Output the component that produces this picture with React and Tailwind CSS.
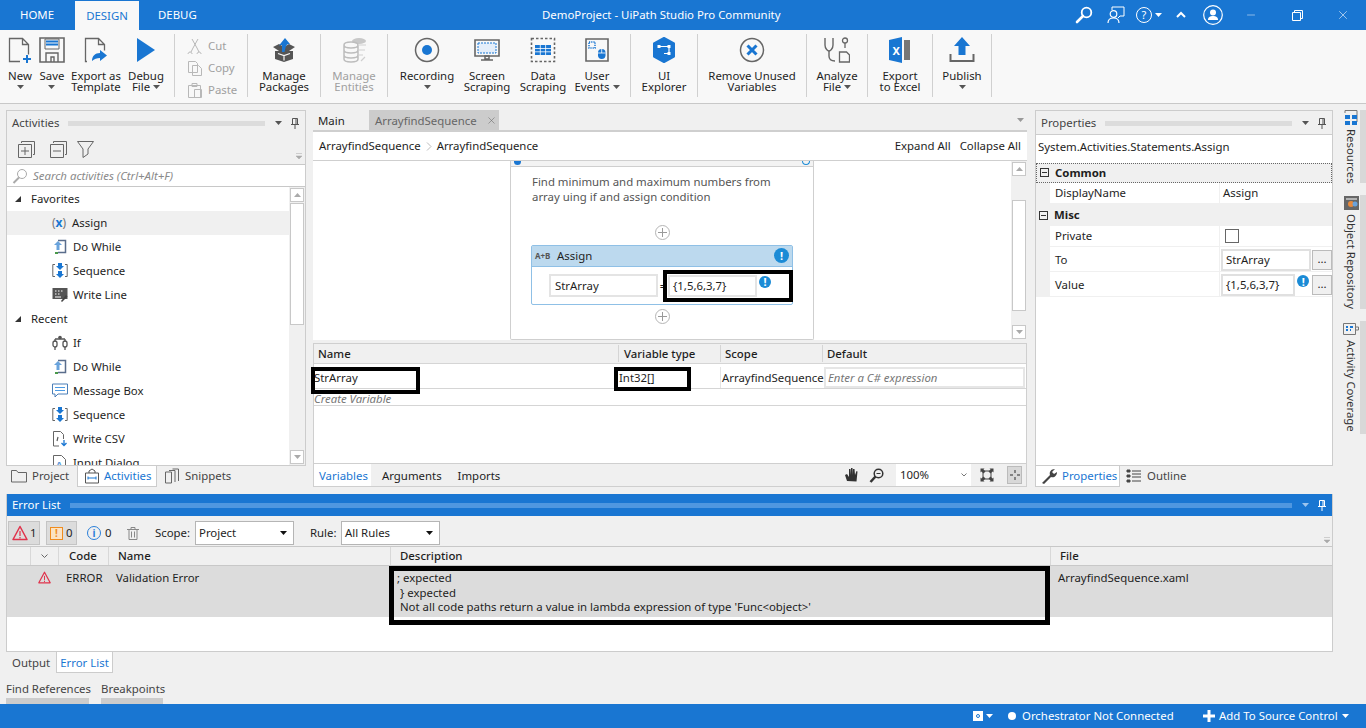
import { Minus, X } from "lucide-react";

const G = "#666666";
const B = "#1976d2";

function Caret({ color = "#555", className = "" }) {
  return (
    <svg width="7" height="4" viewBox="0 0 7 4" className={`inline-block ${className}`}>
      <path d="M0 0h7L3.5 4z" fill={color} />
    </svg>
  );
}

function Sv({ w = 16, h = 16, box, children, className = "" }) {
  return (
    <svg width={w} height={h} viewBox={box || `0 0 ${w} ${h}`} fill="none" className={`shrink-0 ${className}`}>
      {children}
    </svg>
  );
}

/* ribbon icons */
const ribbonIcons = {
  new: (
    <Sv w={24} h={26}>
      <path d="M12 24.500H1.500V1.500h13l6 6v10M14.500 1.500v6h6" stroke={G} strokeWidth="1.300" />
      <path d="M15 22h8M19 18v8" stroke={B} strokeWidth="2" />
    </Sv>
  ),
  save: (
    <Sv w={26} h={26}>
      <path d="M1 1h24v24H1z" stroke={G} strokeWidth="1.600" />
      <path d="M6 2h14v10H6z" stroke={G} strokeWidth="1" />
      <path d="M7 4.500h12M7 7.500h12" stroke={B} strokeWidth="1.800" />
      <path d="M7 25v-9h12v9M12 25v-5h3v5" stroke={G} strokeWidth="1.400" />
    </Sv>
  ),
  export: (
    <Sv w={24} h={26}>
      <path d="M3 24.500H1.500V1.500h13l6 6v6M14.500 1.500v6h6" stroke={G} strokeWidth="1.300" />
      <path d="M8 24c0-5 3-8 8-8v-3l7 5.500-7 5.500v-3c-3 0-6 1-8 3z" fill={B} />
    </Sv>
  ),
  debug: (
    <Sv w={20} h={26}>
      <path d="M1 1l18 12L1 25z" fill={B} />
    </Sv>
  ),
  packages: (
    <Sv w={26} h={26}>
      <path d="M2 10l6-3 5 3v4H8zM24 10l-6-3-5 3v4h5z" fill="#555" />
      <path d="M4 14h5l4-3 4 3h5v8l-9 3-9-3z" fill="#555" />
      <path d="M7 16.500l6 2 6-2M13 18.500v5" stroke="#f8f8f8" strokeWidth="1.200" />
      <path d="M11 15V8l-3 .5L14 1l5 6-3 .5-1.500 3-1 4.500z" fill={B} />
    </Sv>
  ),
  entities: (
    <Sv w={26} h={26}>
      <ellipse cx="18" cy="4" rx="7" ry="3" fill="#c8c8c8" />
      <path d="M3 8c0-2 3-3 7-3s7 1 7 3-3 3-7 3-7-1-7-3zM3 8v14c0 2 3 3 7 3s7-1 7-3V8M3 13c0 2 3 3 7 3s7-1 7-3M3 18c0 2 3 3 7 3s7-1 7-3" stroke="#bdbdbd" strokeWidth="1.500" />
      <path d="M18 8h7M18 13h6M18 18h4M20 24l4-4" stroke="#cfcfcf" strokeWidth="1.200" />
    </Sv>
  ),
  recording: (
    <Sv w={26} h={26}>
      <circle cx="13" cy="13" r="11.500" stroke={G} strokeWidth="1.500" />
      <circle cx="13" cy="13" r="5" fill={B} />
    </Sv>
  ),
  screen: (
    <Sv w={26} h={24}>
      <path d="M1 2h24v16H1z" stroke={G} strokeWidth="1.600" />
      <path d="M4 5h18v10H4z" fill="#e4eefa" stroke={B} strokeWidth="1" strokeDasharray="2 1" />
      <path d="M11 18h4v3h-4zM7 22h12" stroke={G} strokeWidth="1.500" />
    </Sv>
  ),
  data: (
    <Sv w={26} h={26}>
      <path d="M1.500 1.500h23v23h-23z" stroke={G} strokeWidth="1.600" strokeDasharray="2.500 2" />
      <path d="M5 8h16v10H5z" fill={B} />
      <path d="M5 11.500h16M5 14.800h16M10.300 8v10M15.600 8v10" stroke="#fff" strokeWidth="0.800" />
    </Sv>
  ),
  user: (
    <Sv w={24} h={24}>
      <path d="M1 1h22v22H1z" stroke={G} strokeWidth="1.600" />
      <path d="M4 4h6v6H4z" stroke={B} strokeWidth="1.500" strokeDasharray="1.200 1" />
      <rect x="13" y="11" width="7.500" height="10" rx="3.700" fill={B} />
      <path d="M16.700 11v4M13 15h7.500" stroke="#fff" strokeWidth="0.800" />
    </Sv>
  ),
  explorer: (
    <Sv w={24} h={26}>
      <path d="M12 1l10 5.500v13L12 25 2 19.500v-13z" fill={B} stroke={B} strokeWidth="2" strokeLinejoin="round" />
      <path d="M7 9.500h10M17 9.500v7M12 16.500h5" stroke="#fff" strokeWidth="1.200" />
      <rect x="5.500" y="8" width="3" height="3" fill="#fff" />
      <rect x="15.500" y="8" width="3" height="3" fill="#fff" />
      <rect x="15.500" y="15" width="3" height="3" fill="#fff" />
    </Sv>
  ),
  remove: (
    <Sv w={26} h={26}>
      <circle cx="13" cy="13" r="11.500" stroke={G} strokeWidth="1.500" />
      <path d="M8.500 8.500l9 9M17.500 8.500l-9 9" stroke={B} strokeWidth="3" />
    </Sv>
  ),
  analyze: (
    <Sv w={26} h={26}>
      <path d="M1 1v7c0 4 3 6 4 6s4-2 4-6V1" stroke={G} strokeWidth="1.400" />
      <path d="M5 14v5c0 3 2 5 6 5" stroke={G} strokeWidth="1.400" />
      <circle cx="21" cy="3.500" r="2.500" stroke={G} strokeWidth="1.300" />
      <path d="M21 6v5M15.500 25v-10h7l3 3v7z" stroke={G} strokeWidth="1.300" />
    </Sv>
  ),
  excel: (
    <Sv w={22} h={26}>
      <path d="M0 3l13-3v26L0 23z" fill={B} />
      <path d="M15 3h6v20h-6z" fill="#777" />
      <text x="3.500" y="17.500" fill="#fff" fontSize="11" fontWeight="700" fontFamily="Noto Sans">X</text>
    </Sv>
  ),
  publish: (
    <Sv w={26} h={26}>
      <path d="M13 0l8 9h-4.500v9h-7V9H5z" fill={B} />
      <path d="M1.500 17v7h23v-7" stroke={G} strokeWidth="2" />
    </Sv>
  ),
};

const ribbon = [
  { w: 32, icon: "new", lines: ["New"], caret: "below" },
  { w: 32, icon: "save", lines: ["Save"], caret: "below" },
  { w: 56, icon: "export", lines: ["Export as", "Template"] },
  { w: 44, icon: "debug", lines: ["Debug", "File"], caret: "inline" },
  { spacer: 6 },
  { sep: true },
  { clip: true },
  { sep: true },
  { w: 72, icon: "packages", lines: ["Manage", "Packages"] },
  { sep: true },
  { w: 66, icon: "entities", lines: ["Manage", "Entities"], off: true },
  { sep: true },
  { w: 78, icon: "recording", lines: ["Recording"], caret: "below" },
  { w: 42, icon: "screen", lines: ["Screen", "Scraping"] },
  { w: 70, icon: "data", lines: ["Data", "Scraping"] },
  { w: 38, icon: "user", lines: ["User", "Events"], caret: "inline" },
  { spacer: 14 },
  { sep: true },
  { w: 66, icon: "explorer", lines: ["UI", "Explorer"] },
  { sep: true },
  { w: 108, icon: "remove", lines: ["Remove Unused", "Variables"] },
  { sep: true },
  { w: 60, icon: "analyze", lines: ["Analyze", "File"], caret: "inline" },
  { sep: true },
  { w: 64, icon: "excel", lines: ["Export", "to Excel"] },
  { sep: true },
  { w: 58, icon: "publish", lines: ["Publish"], caret: "below" },
  { sep: true },
];

function RibbonButton({ item }) {
  const last = item.lines.length - 1;
  return (
    <div style={{ width: item.w }} className={`shrink-0 flex flex-col items-center pt-[7px] whitespace-nowrap ${item.off ? "text-[#a0a0a0]" : ""}`}>
      <div className="h-[26px] flex items-center justify-center">{ribbonIcons[item.icon]}</div>
      <div className="mt-[7px] text-center leading-[11px]">
        {item.lines.map((l, i) => (
          <div key={i} className="h-[11px]">
            {l}
            {item.caret === "inline" && i === last && <Caret className="ml-[3px] mb-[2px]" />}
          </div>
        ))}
        {item.caret === "below" && (
          <div className="h-[11px] flex items-center justify-center">
            <Caret />
          </div>
        )}
      </div>
    </div>
  );
}

function ClipGroup() {
  const gr = "#b8b8b8";
  const rows = [
    ["Cut", <path key="a" d="M5 1l5 9M11 1L6 10M3 14a2 2 0 1 0 .1 0M12 14a2 2 0 1 0 .1 0M6 10l-2 4M10 10l2 4" stroke={gr} />],
    ["Copy", <path key="b" d="M1.500 1.500h7l2 2v9h-9zM5.500 5.500h6l3 3v7h-9z" stroke={gr} fill="#f8f8f8" />],
    ["Paste", <path key="c" d="M1.500 3.500h12v12h-12zM5 1.500h5v3H5zM7.500 7.500h7v8h-7z" stroke={gr} fill="#f8f8f8" />],
  ];
  return (
    <div className="w-[72px] shrink-0 flex flex-col pt-[5px] pl-[12px] text-[#a0a0a0]">
      {rows.map(([t, p]) => (
        <div key={t} className="h-[22px] flex items-center gap-[5px]">
          <Sv>{p}</Sv>
          {t}
        </div>
      ))}
    </div>
  );
}

function TopIcons() {
  return (
    <div className="ml-auto flex items-center h-[30px]">
      <div className="w-[32px] flex justify-center">
        <Sv w={18} h={18}>
          <circle cx="11.500" cy="6.500" r="4.800" stroke="#fff" strokeWidth="1.800" />
          <path d="M8 10l-6 6" stroke="#fff" strokeWidth="2.600" strokeLinecap="round" />
        </Sv>
      </div>
      <div className="w-[32px] flex justify-center">
        <Sv w={18} h={18}>
          <path d="M5 4V1h12v9h-4l-2 2" stroke="#fff" strokeWidth="1" />
          <circle cx="6.500" cy="8" r="3.300" stroke="#fff" strokeWidth="1.200" />
          <path d="M1 17c0-3 2-5 5.500-5S12 14 12 17" stroke="#fff" strokeWidth="1.200" />
        </Sv>
      </div>
      <div className="w-[4px]" />
      <div className="w-[16px] flex justify-center">
        <div className="w-[16px] h-[16px] rounded-full border border-white text-white text-[11px] leading-[14px] text-center">?</div>
      </div>
      <div className="w-[12px] flex justify-center">
        <Caret color="#fff" />
      </div>
      <div className="w-[34px] flex justify-center">
        <Sv w={10} h={8}>
          <path d="M1 6l4-4 4 4" stroke="#fff" strokeWidth="2" />
        </Sv>
      </div>
      <div className="w-[30px] flex justify-center">
        <Sv w={20} h={20}>
          <circle cx="10" cy="10" r="9.300" stroke="#fff" strokeWidth="1.200" />
          <circle cx="10" cy="7.500" r="3" fill="#fff" />
          <path d="M5 15c0-3 2-4 5-4s5 1 5 4z" fill="#fff" />
        </Sv>
      </div>
      <div className="w-[46px] flex justify-center text-white">
        <Minus size={12} strokeWidth={1} />
      </div>
      <div className="w-[46px] flex justify-center">
        <Sv w={11} h={11}>
          <path d="M.500 2.500h8v8h-8zM2.500 2.500v-2h8v8h-2" stroke="#fff" />
        </Sv>
      </div>
      <div className="w-[46px] flex justify-center text-white">
        <X size={14} strokeWidth={1} />
      </div>
    </div>
  );
}

function Grip({ light }) {
  return (
    <div
      className={`flex-1 h-[5px] bg-[length:2px_2px] ${light ? "bg-[radial-gradient(#4f97e0_1px,transparent_1px)]" : "bg-[radial-gradient(#dcdcdc_1px,transparent_1px)]"}`}
    />
  );
}

function Pin({ color = "#555" }) {
  return (
    <Sv w={8} h={11}>
      <path d="M1.500.500h5v6h-5zM0 6.500h8M4 7v4M5 1v5" stroke={color} />
    </Sv>
  );
}

function PanelTitle({ title, dark = false }) {
  return (
    <div className={`flex items-center pl-[5px] pr-[6px] gap-[9px] shrink-0 ${dark ? "h-[22px] bg-[#1976d2] text-white" : "h-[23px] pt-px text-[#444]"}`}>
      <span>{title}</span>
      <Grip light={dark} />
      <Caret color={dark ? "#9cc4ee" : "#555"} className="ml-[1px]" />
      <Pin color={dark ? "#fff" : "#555"} />
    </div>
  );
}

function ScrollBar({ className = "", thumbTop, thumbH }) {
  return (
    <div className={`w-[16px] shrink-0 flex flex-col items-center bg-[#f0f0f0] pt-[1px] pb-[1px] ${className}`}>
      <div className="w-[14px] h-[14px] bg-white border border-[#c8c8c8] flex items-center justify-center">
        <Caret color="#aaa" className="rotate-180" />
      </div>
      <div className="flex-1 w-full">
        <div style={{ marginTop: thumbTop, height: thumbH }} className="w-[14px] mx-auto bg-white border border-[#c8c8c8]" />
      </div>
      <div className="w-[14px] h-[14px] bg-white border border-[#c8c8c8] flex items-center justify-center">
        <Caret color="#aaa" />
      </div>
    </div>
  );
}

/* activity tree icons */
const treeIcons = {
  assign: (
    <span className="w-[16px] text-center text-[12px] leading-none text-[#777] whitespace-nowrap -ml-[1px]">
      (<span className="font-bold text-[#1976d2]">x</span>)
    </span>
  ),
  dowhile: (
    <Sv>
      <path d="M6 1.500h7.500v12H6" stroke="#5a6d8c" strokeWidth="1.500" />
      <path d="M6 2L2 6h2.500v5h3V6H10z" fill="#6aa3dc" />
      <rect x="3" y="13" width="3" height="2" fill="#4a9a4a" />
    </Sv>
  ),
  sequence: (
    <Sv>
      <path d="M3 1.500H.800v12H3M13 1.500h2.200v12H13" stroke="#666" />
      <path d="M6 0h4v3h2L8 7 4 3h2zM6 8h4v3h2l-4 4-4-4h2z" fill="#1976d2" />
    </Sv>
  ),
  writeline: (
    <Sv>
      <path d="M.500 1h15v11H.500z" fill="#555" />
      <path d="M3 4h1.500M6 4h1.500M9 4h1.500M3 7h1.500M6 7h1.500M3 10h6" stroke="#fff" />
      <path d="M9 14l5-6 1.500 1.500L10 15z" fill="#444" />
    </Sv>
  ),
  if: (
    <Sv>
      <path d="M8 1v3M3 4h10M3 4v3M13 4v3" stroke="#555" strokeWidth="1.300" />
      <rect x="1" y="6" width="4" height="6" rx="2" stroke="#555" strokeWidth="1.300" />
      <rect x="11" y="6" width="4" height="6" rx="2" stroke="#555" strokeWidth="1.300" />
      <circle cx="8" cy="2.500" r="1.800" fill="#555" />
      <path d="M3 12v3M13 12v3" stroke="#555" strokeWidth="1.300" />
    </Sv>
  ),
  message: (
    <Sv>
      <path d="M.500 1h15v10H6l-3 3v-3H.500z" stroke="#4b7fb8" />
      <path d="M3 4.500h10M3 7.500h10" stroke="#4b9ae4" />
    </Sv>
  ),
  csv: (
    <Sv>
      <path d="M7 15H1.500V.500h7l3 3V8" stroke="#666" />
      <path d="M6 6l-1 4" stroke="#555" strokeWidth="1.200" />
      <path d="M12 9v5M9.500 12l2.500 2.500 2.500-2.500" stroke="#1976d2" strokeWidth="1.300" />
    </Sv>
  ),
  input: (
    <Sv>
      <path d="M1.500 15V.500h8l4 4V15z" stroke="#666" />
      <text x="4" y="13" fontSize="9" fontWeight="700" fill="#5a9ad8" fontFamily="Noto Sans">A</text>
    </Sv>
  ),
};

const tree = [
  { head: "Favorites" },
  { icon: "assign", t: "Assign", sel: true },
  { icon: "dowhile", t: "Do While" },
  { icon: "sequence", t: "Sequence" },
  { icon: "writeline", t: "Write Line" },
  { head: "Recent" },
  { icon: "if", t: "If" },
  { icon: "dowhile", t: "Do While" },
  { icon: "message", t: "Message Box" },
  { icon: "sequence", t: "Sequence" },
  { icon: "csv", t: "Write CSV" },
  { icon: "input", t: "Input Dialog" },
];

function ActivitiesPanel() {
  return (
    <div className="w-[300px] shrink-0 flex flex-col">
      <div className="h-[356px] border border-[#cccccc] flex flex-col">
        <PanelTitle title="Activities" />
        <div className="h-[30px] flex items-center pl-[11px] pr-[3px] gap-[15px] shrink-0">
          <Sv w={17} h={17}>
            <path d="M3.500 2V.500h13v13H15M.500 3.500h13v13H.500z" stroke="#666" />
            <path d="M3 10h8M7 6v8" stroke="#666" />
          </Sv>
          <Sv w={17} h={17}>
            <path d="M3.500 2V.500h13v13H15M.500 3.500h13v13H.500z" stroke="#666" />
            <path d="M3 10h8" stroke="#666" />
          </Sv>
          <Sv w={18} h={17} className="-ml-[5px]">
            <path d="M.500.500h16L11 8v5l-5 3.500V8z" stroke="#666" />
          </Sv>
          <Sv w={6} h={6} className="ml-auto mt-[14px]">
            <path d="M0 .500h6M0 3h6L3 6z" fill="#aaa" stroke="#aaa" strokeWidth=".5" />
          </Sv>
        </div>
        <div className="h-[23px] bg-white border-y border-[#c8c8c8] flex items-center pl-[5px] gap-[5px] text-[#8a8a8a] italic shrink-0">
          <Sv>
            <circle cx="10" cy="6" r="4.500" stroke="#aaa" />
            <path d="M7 9.500L1.500 15" stroke="#aaa" strokeWidth="2" />
          </Sv>
          Search activities (Ctrl+Alt+F)
        </div>
        <div className="flex-1 flex bg-white overflow-hidden">
          <div className="flex-1 overflow-hidden">
            {tree.map((r, i) =>
              r.head ? (
                <div key={i} className="h-[24px] flex items-center pl-[8px] gap-[10px]">
                  <Sv w={6} h={6}>
                    <path d="M6 0v6H0z" fill="#333" />
                  </Sv>
                  {r.head}
                </div>
              ) : (
                <div key={i} className={`h-[24px] flex items-center pl-[45px] gap-[5px] ${r.sel ? "bg-[#f0f0f0]" : ""}`}>
                  {treeIcons[r.icon]}
                  {r.t}
                </div>
              )
            )}
          </div>
          <ScrollBar thumbTop="1px" thumbH="122px" />
        </div>
      </div>
      <div className="flex h-[21px] items-start text-[#444]">
        <div className="w-[71px] h-[20px] flex items-center pl-[5px] gap-[5px]">
          <Sv>
            <path d="M.500 3V14h15V4.500H7L5.500 2.500H.500z" stroke="#666" />
          </Sv>
          Project
        </div>
        <div className="w-[80px] h-[21px] bg-white border border-t-0 border-[#cccccc] flex items-center pl-[6px] gap-[4px] text-[#1976d2]">
          <Sv>
            <path d="M1.500 5h13v10h-13zM5 5V3l3-2 3 2v2" stroke="#555" />
            <path d="M4 10h8M4 8.500v3M12 8.500v3" stroke="#1976d2" />
          </Sv>
          Activities
        </div>
        <div className="h-[20px] flex items-center pl-[7px] gap-[5px]">
          <Sv>
            <path d="M1.500 4h6v11h-6zM5 2.500h6V14M8.500 1h6v12" stroke="#666" />
          </Sv>
          Snippets
        </div>
      </div>
    </div>
  );
}

function PlusCircle() {
  return (
    <div className="w-[15px] h-[15px] rounded-full border border-[#b5b5b5] flex items-center justify-center">
      <Sv w={9} h={9}>
        <path d="M0 4.500h9M4.500 0v9" stroke="#9a9a9a" />
      </Sv>
    </div>
  );
}

function Bang({ size = 14 }) {
  return (
    <div
      style={{ width: size, height: size }}
      className="rounded-full bg-[#1b8bd6] text-white font-bold text-[11px] leading-none flex items-center justify-center shrink-0"
    >
      !
    </div>
  );
}

function CenterPanel() {
  return (
    <div className="w-[714px] ml-[7px] shrink-0 flex flex-col">
      <div className="h-[20px] flex items-center shrink-0">
        <span className="w-[56px] pl-[5px] pt-px">Main</span>
        <div className="w-[130px] h-[20px] bg-[#cccccc] text-[#666] flex items-center pl-[6px] gap-[9px] whitespace-nowrap pt-px">
          ArrayfindSequence
          <X size={11} strokeWidth={1.2} className="text-[#666] shrink-0" />
        </div>
        <Caret color="#999" className="ml-auto mr-[3px]" />
      </div>
      <div className="h-[31px] bg-white border-t-2 border-b border-[#cfcfcf] flex items-center pl-[6px] pr-[6px] gap-[5px] shrink-0">
        ArrayfindSequence
        <Sv w={6} h={9}>
          <path d="M1 .500l4 4-4 4" stroke="#bbb" />
        </Sv>
        ArrayfindSequence
        <div className="ml-auto flex gap-[9px]">
          <span>Expand All</span>
          <span>Collapse All</span>
        </div>
      </div>
      <div className="h-[179px] bg-white flex shrink-0">
        <div className="flex-1 overflow-hidden">
          <div className="w-[304px] h-[179px] ml-[197px] flex flex-col">
            <div className="h-[6px] bg-[#f3f3f3] border-b border-[#cfcfcf] border-x flex justify-between overflow-hidden px-[3px] shrink-0">
              <div className="w-[7px] h-[4px] rounded-b-full bg-[#1976d2]" />
              <div className="w-[8px] h-[4px] rounded-b-full border-b border-x border-[#1b8bd6]" />
            </div>
            <div className="flex-1 border-x border-b border-[#cfcfcf] rounded-b-[2px] flex flex-col items-center">
              <div className="w-full pl-[21px] pt-[7px] leading-[15px] text-[#555]">
                Find minimum and maximum numbers from
                <br />
                array uing if and assign condition
              </div>
              <div className="mt-[21px]">
                <PlusCircle />
              </div>
              <div className="w-[262px] h-[60px] mt-[5px] rounded-[2px] border border-[#8fc0e6] flex flex-col">
                <div className="h-[21px] bg-[#bcd9ee] flex items-center pl-[3px] pr-[3px] pb-px border-b border-[#8fc0e6]">
                  <span className="w-[22px] text-[8px] font-bold text-[#555]">A+B</span>
                  <span>Assign</span>
                  <div className="ml-auto">
                    <Bang size={15} />
                  </div>
                </div>
                <div className="flex-1 flex items-center pl-[17px]">
                  <div className="w-[109px] h-[23px] border-2 border-[#e4e4e4] flex items-center pl-[4px]">StrArray</div>
                  <span className="w-[10px] text-center">=</span>
                  <div className="w-[89px] h-[22px] border-2 border-[#e4e4e4] flex items-center pl-[3px]">{"{1,5,6,3,7}"}</div>
                  <div className="pl-[2px] -mt-[8px]">
                    <Bang size={12} />
                  </div>
                </div>
              </div>
              <div className="mt-[4px]">
                <PlusCircle />
              </div>
            </div>
          </div>
        </div>
        <ScrollBar thumbTop="24px" thumbH="111px" />
      </div>
      <div className="h-[4px] border-b border-[#cfcfcf] shrink-0" />
      <div className="bg-white border-x border-[#cfcfcf] flex flex-col shrink-0">
        <div className="h-[20px] bg-[#f0f0f0] border-b border-[#d5d5d5] flex items-center font-medium">
          <div className="w-[304px] pl-[4px]">Name</div>
          <div className="w-[102px] pl-[5px] border-l border-[#d5d5d5]">Variable type</div>
          <div className="w-[102px] pl-[4px] border-l border-[#d5d5d5]">Scope</div>
          <div className="pl-[4px] border-l border-[#d5d5d5]">Default</div>
        </div>
        <div className="h-[25px] flex items-center pt-[3px] border-b border-[#d5d5d5]">
          <div className="w-[304px]">StrArray</div>
          <div className="w-[102px] pl-[1px]">Int32[]</div>
          <div className="w-[102px] pl-[1px] whitespace-nowrap border-l border-[#e4e4e4] h-full flex items-center">ArrayfindSequence</div>
          <div className="ml-[2px] w-[201px] h-[21px] border-2 border-[#e6e6e6] flex items-center pl-[2px] italic text-[#777]">Enter a C# expression</div>
        </div>
        <div className="h-[17px] flex items-center pt-[3px] border-b border-[#d5d5d5] italic text-[#777]">Create Variable</div>
      </div>
      <div className="h-[57px] bg-white border-x border-[#cfcfcf] shrink-0" />
      <div className="h-[24px] border border-[#cfcfcf] flex items-stretch shrink-0">
        <div className="w-[57px] bg-white text-[#1976d2] pl-[5px] pt-px flex items-center">Variables</div>
        <div className="pl-[11px] pt-px flex items-center">Arguments</div>
        <div className="pl-[16px] pt-px flex items-center">Imports</div>
        <div className="ml-auto flex items-center">
          <Sv w={16} h={16}>
            <path d="M3 14L1 8l2-1 2 3V2h1.500l.5 6V1h1.500l.5 7V2h1.500l.5 6 1.500-4 1 .5-1 10z" fill="#333" />
          </Sv>
          <Sv w={15} h={15} className="ml-[9px]">
            <circle cx="9.500" cy="5.500" r="4.300" stroke="#333" strokeWidth="1.500" />
            <path d="M6.500 8.500L1.500 14" stroke="#333" strokeWidth="2.500" />
            <path d="M7.500 5.500h4" stroke="#333" />
          </Sv>
          <div className="w-[75px] h-[22px] ml-[12px] bg-white flex items-center pl-[4px]">
            100%
            <Sv w={6} h={4} className="ml-auto mr-[4px]">
              <path d="M.500.500L3 3 5.500.500" stroke="#777" />
            </Sv>
          </div>
          <Sv w={14} h={14} className="ml-[9px]">
            <path d="M.500.500h4l-1 1 2 2-2 2-2-2-1 1zM13.500.500h-4l1 1-2 2 2 2 2-2 1 1zM.500 13.500h4l-1-1 2-2-2-2-2 2-1-1zM13.500 13.500h-4l1-1-2-2 2-2 2 2 1-1z" fill="#444" />
            <path d="M3 3h8v8H3z" stroke="#444" />
          </Sv>
          <div className="w-[15px] h-[18px] ml-[13px] mr-[4px] bg-[#d8d8d8] border border-[#bbb] flex items-center justify-center">
            <Sv w={10} h={10}>
              <path d="M5 0v3M5 7v3M0 5h3M7 5h3" stroke="#666" strokeWidth="1.500" />
            </Sv>
          </div>
        </div>
      </div>
    </div>
  );
}

function EllipsisBtn() {
  return <div className="w-[20px] h-[20px] ml-[1px] bg-[#f0f0f0] border border-[#bbb] flex items-center justify-center leading-none pb-[2px]">...</div>;
}

function PropRow({ h, label, shift, children }) {
  return (
    <div style={{ height: h }} className="flex">
      <div className="w-[14px] bg-[#f0f0f0]" />
      <div className={`w-[170px] pl-[5px] flex items-center border-b border-[#f0f0f0] border-r ${shift ? "pt-[2px]" : ""}`}>{label}</div>
      <div className={`flex-1 flex items-center border-b border-[#f0f0f0] overflow-hidden ${shift ? "pt-[2px]" : ""}`}>{children}</div>
    </div>
  );
}

function PropHead({ h, title, dotted }) {
  return (
    <div style={{ height: h }} className={`flex items-center pl-[2px] gap-[6px] bg-[#f0f0f0] font-bold ${dotted ? "border border-dotted border-[#666] pb-px" : ""}`}>
      <div className="w-[9px] h-[9px] border border-[#333] flex items-center justify-center ml-[1px]">
        <div className="w-[5px] h-px bg-[#333]" />
      </div>
      {title}
    </div>
  );
}

function PropertiesPanel() {
  return (
    <div className="w-[298px] ml-[8px] shrink-0 flex flex-col">
      <div className="h-[356px] border border-[#cccccc] flex flex-col">
        <PanelTitle title="Properties" />
        <div className="flex-1 bg-white flex flex-col border-t border-[#cccccc]">
          <div className="h-[28px] pb-[4px] flex items-center pl-[2px]">System.Activities.Statements.Assign</div>
          <PropHead h={20} title="Common" dotted />
          <PropRow h={21} label="DisplayName">
            <span className="pl-[3px]">Assign</span>
          </PropRow>
          <PropHead h={22} title="Misc" />
          <PropRow h={21} label="Private">
            <div className="w-[14px] h-[14px] ml-[5px] border border-[#666]" />
          </PropRow>
          <PropRow h={25} label="To" shift>
            <div className="w-[91px] h-[22px] ml-[1px] border-2 border-[#e0e0e0] flex items-center pl-[3px]">StrArray</div>
            <EllipsisBtn />
          </PropRow>
          <PropRow h={25} label="Value" shift>
            <div className="w-[75px] h-[22px] ml-[1px] border-2 border-[#e0e0e0] flex items-center pl-[3px]">{"{1,5,6,3,7}"}</div>
            <div className="w-[16px] pl-[2px] -mt-[8px]">
              <Bang size={12} />
            </div>
            <EllipsisBtn />
          </PropRow>
        </div>
      </div>
      <div className="flex h-[21px] items-start text-[#444]">
        <div className="w-[85px] h-[21px] bg-white border border-t-0 border-[#cccccc] flex items-center pl-[5px] gap-[4px] text-[#1976d2]">
          <Sv w={17} h={17}>
            <path d="M1 15l8-8c-1-3 1-6 5-6l-3 3 2 2 3-2c0 4-3 6-6 5l-7 7z" fill="#444" />
          </Sv>
          Properties
        </div>
        <div className="h-[20px] flex items-center pl-[6px] gap-[5px]">
          <Sv>
            <path d="M1 2h3v2H1zM1 7h3v2H1zM1 12h3v2H1zM6 3h9M6 6h9M6 9h9M6 13h9" fill="#444" stroke="#444" strokeWidth="1" />
          </Sv>
          Outline
        </div>
      </div>
    </div>
  );
}

function SideTab({ h, label, icon }) {
  return (
    <div style={{ height: h }} className="flex shrink-0">
      <div className="w-[18px] flex flex-col items-center text-[#333]">
        {icon}
        <div className="[writing-mode:vertical-rl] whitespace-nowrap leading-[16px] mt-[3px]">{label}</div>
      </div>
      <div className="w-[6px] bg-[#d8d8d8]" />
    </div>
  );
}

function SideTabs() {
  return (
    <div className="w-[24px] ml-[9px] shrink-0 flex flex-col gap-[12px]">
      <SideTab
        h={73}
        label="Resources"
        icon={
          <Sv w={14} h={16}>
            <path d="M1 3V.500h12V12" stroke="#777" />
            <path d="M1 5h5v4H1zM8 5h5v4H8zM1 11h5v4H1zM8 11h5v4H8z" fill="#1976d2" />
          </Sv>
        }
      />
      <SideTab
        h={114}
        label="Object Repository"
        icon={
          <Sv w={15} h={16}>
            <path d="M0 1h15v14H0z" fill="#666" />
            <circle cx="7" cy="9" r="3" fill="#e88a3c" />
            <circle cx="11" cy="9" r="2.500" fill="#6aa3dc" />
            <path d="M2 4h11" stroke="#fff" />
          </Sv>
        }
      />
      <SideTab
        h={113}
        label="Activity Coverage"
        icon={
          <Sv w={16} h={16}>
            <path d="M.500 2.500h12v11H.500zM12.500 6h3v3h-3" stroke="#777" />
            <path d="M3 9h2M3 6h2M7 6h3M7 9h1" stroke="#1976d2" strokeWidth="2" />
          </Sv>
        }
      />
    </div>
  );
}

function Triangle({ size = 16, color = "#e0324b" }) {
  return (
    <Sv w={size} h={size} box="0 0 16 16">
      <path d="M8 1.500L15 14.500H1z" stroke={color} strokeWidth="1.500" strokeLinejoin="round" />
      <path d="M8 6v5M8 12v1.500" stroke={color} strokeWidth="1.200" />
    </Sv>
  );
}

function SelectBox({ w, text }) {
  return (
    <div style={{ width: w }} className="h-[24px] bg-white border border-[#b5b5b5] flex items-center pl-[3px] pr-[6px]">
      {text}
      <Sv w={7} h={4} className="ml-auto">
        <path d="M0 0h7L3.500 4z" fill="#111" />
      </Sv>
    </div>
  );
}

function ErrorPanel() {
  return (
    <div className="w-[1327px] ml-[6px] h-[158px] mt-[6px] border border-[#cccccc] border-t-0 flex flex-col shrink-0">
      <PanelTitle title="Error List" dark />
      <div className="h-[30px] flex items-center pl-[1px] pt-[4px] shrink-0">
        <div className="w-[32px] h-[24px] bg-[#dcdcdc] border border-[#c4c4c4] flex items-center pl-[3px] gap-[2px]">
          <Triangle />1
        </div>
        <div className="w-[31px] h-[24px] ml-[6px] bg-[#dcdcdc] border border-[#c4c4c4] flex items-center pl-[3px] gap-[3px]">
          <div className="w-[13px] h-[13px] border border-[#f08c1e] bg-[#fbe3c4] text-[#f08c1e] font-bold text-[10px] leading-none flex items-center justify-center">!</div>
          0
        </div>
        <div className="ml-[10px] w-[25px] flex items-center gap-[4px]">
          <div className="w-[14px] h-[14px] rounded-full border-[1.5px] border-[#2a7fd9] text-[#2a7fd9] text-[10px] font-bold leading-none flex items-center justify-center">i</div>
          0
        </div>
        <Sv w={12} h={13} className="ml-[15px]">
          <path d="M0 2.500h12M4 2.500V.500h4v2M2 2.500v10h8v-10M4.500 4.500v6M7.500 4.500v6" stroke="#888" />
        </Sv>
        <span className="ml-[16px] w-[40px]">Scope:</span>
        <SelectBox w={99} text="Project" />
        <span className="ml-[16px] w-[31px]">Rule:</span>
        <SelectBox w={99} text="All Rules" />
        <Sv w={6} h={6} className="ml-auto mr-[2px] mt-[14px]">
          <path d="M0 .500h6M0 3h6L3 6z" fill="#aaa" stroke="#aaa" strokeWidth=".5" />
        </Sv>
      </div>
      <div className="h-[20px] bg-[#f0f0f0] border-t border-b border-[#c8c8c8] flex items-center font-medium shrink-0">
        <div className="w-[23px] h-full" />
        <div className="w-[28px] h-full border-l border-[#d8d8d8] flex items-center justify-center">
          <Sv w={7} h={4}>
            <path d="M.500.500L3.500 3.500 6.500.500" stroke="#666" />
          </Sv>
        </div>
        <div className="w-[50px] h-full border-l border-[#d8d8d8] pl-[10px] flex items-center">Code</div>
        <div className="w-[282px] h-full border-l border-[#d8d8d8] pl-[9px] flex items-center">Name</div>
        <div className="w-[660px] h-full border-l border-[#d8d8d8] pl-[9px] flex items-center">Description</div>
        <div className="flex-1 h-full border-l border-[#d8d8d8] pl-[9px] flex items-center">File</div>
      </div>
      <div className="h-[51px] bg-[#dcdcdc] flex shrink-0">
        <div className="w-[52px] pt-[5px] pl-[31px]">
          <Triangle size={13} />
        </div>
        <div className="w-[50px] pl-[7px] pt-[3px]">ERROR</div>
        <div className="w-[281px] pl-[7px] pt-[3px]">Validation Error</div>
        <div className="w-[660px] pl-[7px] pt-[5px] leading-[14.5px]">
          ; expected
          <br />
          &nbsp;} expected
          <br />
          &nbsp;Not all code paths return a value in lambda expression of type 'Func&lt;object&gt;'
        </div>
        <div className="pl-[8px] pt-[3px]">ArrayfindSequence.xaml</div>
      </div>
      <div className="flex-1 bg-white" />
    </div>
  );
}

export default function App() {
  return (
    <div className="relative w-[1366px] h-[728px] overflow-hidden bg-[#f0f0f0] flex flex-col text-[11.4px] text-[#1e1e1e] font-['Noto_Sans',sans-serif]">
      {/* Title bar */}
      <div className="h-[30px] bg-[#1976d2] flex items-stretch text-white shrink-0">
        <div className="w-[75px] pl-[20px] flex items-center">HOME</div>
        <div className="w-[64px] mt-px bg-[#f8f8f8] text-[#1976d2] flex items-center justify-center">DESIGN</div>
        <div className="w-[60px] pl-[19px] flex items-center">DEBUG</div>
        <div className="ml-[343px] flex items-center whitespace-nowrap">DemoProject - UiPath Studio Pro Community</div>
        <TopIcons />
      </div>

      {/* Ribbon */}
      <div className="h-[74px] bg-[#f8f8f8] border-b border-[#c8c8c8] flex pl-[4px] shrink-0">
        {ribbon.map((item, i) => {
          if (item.spacer) return <div key={i} style={{ width: item.spacer }} className="shrink-0" />;
          if (item.sep) return <div key={i} className="w-px h-[63px] mt-[4px] bg-[#d0d0d0] shrink-0" />;
          if (item.clip) return <ClipGroup key={i} />;
          return <RibbonButton key={i} item={item} />;
        })}
      </div>

      {/* Panels */}
      <div className="h-[378px] mt-[6px] pl-[6px] flex shrink-0">
        <ActivitiesPanel />
        <CenterPanel />
        <PropertiesPanel />
        <SideTabs />
      </div>

      <ErrorPanel />

      {/* Bottom tabs */}
      <div className="h-[21px] ml-[6px] flex items-start shrink-0">
        <div className="w-[50px] h-[21px] pl-[6px] pt-px flex items-center text-[#444]">Output</div>
        <div className="w-[57px] h-[21px] bg-white border border-t-0 border-[#cccccc] pt-px flex items-center justify-center text-[#1976d2]">Error List</div>
      </div>
      <div className="h-[31px] ml-[6px] flex gap-[12px] items-end shrink-0 text-[#444]">
        <div className="w-[83px] whitespace-nowrap border-b-[6px] border-[#cccccc] leading-[18px]">Find References</div>
        <div className="w-[62px] whitespace-nowrap border-b-[6px] border-[#cccccc] leading-[18px]">Breakpoints</div>
      </div>

      {/* Status bar */}
      <div className="h-[24px] bg-[#1976d2] flex items-center pl-[973px] text-white shrink-0">
        <div className="w-[10px] h-[10px] bg-white flex items-center justify-center">
          <div className="w-[4px] h-[4px] rounded-full border border-[#1976d2]" />
        </div>
        <Caret color="#fff" className="ml-[3px]" />
        <div className="w-[8px] h-[8px] rounded-full bg-white ml-[15px]" />
        <span className="ml-[6px] w-[150px] whitespace-nowrap">Orchestrator Not Connected</span>
        <Sv w={12} h={12} className="ml-[31px]">
          <path d="M6 0v12M0 6h12" stroke="#fff" strokeWidth="3" />
        </Sv>
        <span className="ml-[4px] whitespace-nowrap">Add To Source Control</span>
        <Caret color="#fff" className="ml-[4px]" />
      </div>

      {/* black annotation boxes drawn over the screenshot */}
      <div className="absolute left-[663px] top-[270px] w-[130px] h-[32px] border-[4px] border-black" />
      <div className="absolute left-[311px] top-[367px] w-[109px] h-[27px] border-[4px] border-black" />
      <div className="absolute left-[614px] top-[367px] w-[77px] h-[24px] border-[4px] border-black" />
      <div className="absolute left-[389px] top-[566px] w-[661px] h-[59px] border-[5px] border-black" />
    </div>
  );
}
